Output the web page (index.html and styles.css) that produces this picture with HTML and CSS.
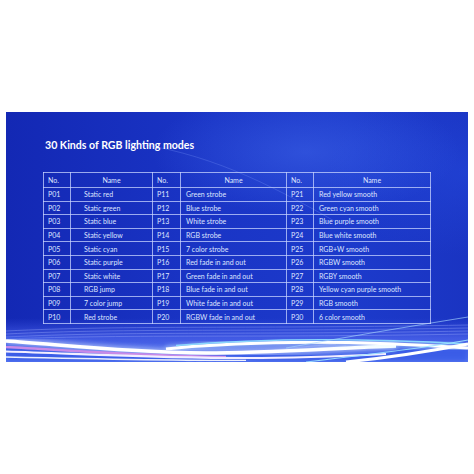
FILE: index.html
```html
<!DOCTYPE html>
<html>
<head>
<meta charset="utf-8">
<link rel="stylesheet" href="styles.css">
</head>
<body>
<div class="banner">
  <svg class="streaks" viewBox="0 0 462 250" preserveAspectRatio="none">
    <defs>
      <linearGradient id="glow" x1="0" y1="0" x2="0" y2="1">
        <stop offset="0" stop-color="#3a50e0" stop-opacity="0"/>
        <stop offset="0.45" stop-color="#4a62ea" stop-opacity="0.8"/>
        <stop offset="1" stop-color="#6080f4" stop-opacity="1"/>
      </linearGradient>
      <filter id="b1"><feGaussianBlur stdDeviation="0.7"/></filter>
      <filter id="b2"><feGaussianBlur stdDeviation="2.5"/></filter>
    </defs>
    <rect x="0" y="206" width="462" height="44" fill="url(#glow)"/>
    <g stroke="#a4b4ff" stroke-width="0.6" fill="none" opacity="0.6">
      <path d="M0 219 C120 213 250 217 462 213"/>
      <path d="M0 222 C120 216 250 220 462 216"/>
      <path d="M0 225 C120 219 250 223 462 219"/>
      <path d="M0 227 C130 222 250 226 462 222"/>
      <path d="M180 250 C230 242 280 236 330 232"/>
      <path d="M190 250 C240 243 290 238 340 234"/>
      <path d="M200 250 C250 244 300 240 350 236"/>
      <path d="M210 250 C260 245 310 241 360 238"/>
      <path d="M220 250 C270 246 320 243 370 240"/>
    </g>
    <path d="M0 226 C60 230 130 238 234 238 C300 238 380 234 462 234 L462 250 L0 250 Z" fill="#3658e6" opacity="0.8" filter="url(#b2)"/>
    <path d="M0 229 C50 232 110 240 200 241 C260 241 330 236 390 234" stroke="#dfe8ff" stroke-width="7" fill="none" opacity="0.6" filter="url(#b2)"/>
    <path d="M0 229 C50 232 110 240 200 241 C260 241 330 236 390 234" stroke="#ffffff" stroke-width="3.6" fill="none" filter="url(#b1)"/>
    <path d="M0 235 C60 238 130 244 220 245" stroke="#c88ae8" stroke-width="2.4" fill="none" filter="url(#b1)"/>
    <path d="M0 239.5 C70 241.5 150 246 240 246 C300 246 340 244 380 242" stroke="#f2eeff" stroke-width="2.2" fill="none" filter="url(#b1)"/>
    <path d="M0 245 C90 247 170 248.5 240 248.5" stroke="#ffffff" stroke-width="1.6" fill="none" opacity="0.9" filter="url(#b1)"/>
    <path d="M160 237 C260 227 360 229 462 236" stroke="#cff4ff" stroke-width="6" fill="none" opacity="0.5" filter="url(#b2)"/>
    <path d="M160 237 C260 227 360 229 462 236" stroke="#ffffff" stroke-width="3" fill="none" filter="url(#b1)"/>
    <path d="M170 233.5 C270 225 370 227 462 232" stroke="#8fe0ff" stroke-width="1.4" fill="none" opacity="0.9" filter="url(#b1)"/>
    <path d="M340 250 C380 246 420 240 462 232" stroke="#ffffff" stroke-width="2.8" fill="none" filter="url(#b1)"/>
    <path d="M300 250 C360 243 420 236 462 228" stroke="#9fe4ff" stroke-width="1.2" fill="none" opacity="0.9"/>
    <path d="M280 236 C340 225 400 215 462 205" stroke="#a8d8ff" stroke-width="0.8" fill="none" opacity="0.8"/>
    <path d="M120 30 C200 40 260 70 330 110" stroke="#6a86f0" stroke-width="0.7" fill="none" opacity="0.5"/>
  </svg>
  <h1 class="title">30 Kinds of RGB lighting modes</h1>
  <table class="modes">
    <colgroup>
      <col class="w1"><col class="w2"><col class="w3"><col class="w4"><col class="w5"><col class="w6">
    </colgroup>
    <thead>
      <tr><th class="no">No.</th><th>Name</th><th class="no">No.</th><th>Name</th><th class="no">No.</th><th>Name</th></tr>
    </thead>
    <tbody>
      <tr><td class="no">P01</td><td class="nm">Static red</td><td class="no">P11</td><td class="nm">Green strobe</td><td class="no">P21</td><td class="nm">Red yellow smooth</td></tr>
      <tr><td class="no">P02</td><td class="nm">Static green</td><td class="no">P12</td><td class="nm">Blue strobe</td><td class="no">P22</td><td class="nm">Green cyan smooth</td></tr>
      <tr><td class="no">P03</td><td class="nm">Static blue</td><td class="no">P13</td><td class="nm">White strobe</td><td class="no">P23</td><td class="nm">Blue purple smooth</td></tr>
      <tr><td class="no">P04</td><td class="nm">Static yellow</td><td class="no">P14</td><td class="nm">RGB strobe</td><td class="no">P24</td><td class="nm">Blue white smooth</td></tr>
      <tr><td class="no">P05</td><td class="nm">Static cyan</td><td class="no">P15</td><td class="nm">7 color strobe</td><td class="no">P25</td><td class="nm">RGB+W smooth</td></tr>
      <tr><td class="no">P06</td><td class="nm">Static purple</td><td class="no">P16</td><td class="nm">Red fade in and out</td><td class="no">P26</td><td class="nm">RGBW smooth</td></tr>
      <tr><td class="no">P07</td><td class="nm">Static white</td><td class="no">P17</td><td class="nm">Green fade in and out</td><td class="no">P27</td><td class="nm">RGBY smooth</td></tr>
      <tr><td class="no">P08</td><td class="nm">RGB jump</td><td class="no">P18</td><td class="nm">Blue fade in and out</td><td class="no">P28</td><td class="nm">Yellow cyan purple smooth</td></tr>
      <tr><td class="no">P09</td><td class="nm">7 color jump</td><td class="no">P19</td><td class="nm">White fade in and out</td><td class="no">P29</td><td class="nm">RGB smooth</td></tr>
      <tr><td class="no">P10</td><td class="nm">Red strobe</td><td class="no">P20</td><td class="nm">RGBW fade in and out</td><td class="no">P30</td><td class="nm">6 color smooth</td></tr>
    </tbody>
  </table>
</div>
</body>
</html>
```
FILE: styles.css
```css
html, body {
  margin: 0;
  padding: 0;
  background: #ffffff;
}
body {
  width: 474px;
  height: 474px;
  overflow: hidden;
}
.banner {
  position: relative;
  margin: 112px 6px 0 6px;
  height: 250px;
  box-sizing: border-box;
  padding: 27px 0 0 37px;
  overflow: hidden;
  background:
    radial-gradient(ellipse 220px 90px at 300px 40px, rgba(70,110,240,0.45), rgba(70,110,240,0) 70%),
    radial-gradient(ellipse 200px 120px at 460px 60px, rgba(40,80,230,0.4), rgba(40,80,230,0) 70%),
    linear-gradient(90deg, #1328b4 0%, #1a35c6 45%, #1c3acb 75%, #1a34c2 100%);
}
.streaks {
  position: absolute;
  left: 0;
  top: 0;
  width: 462px;
  height: 250px;
}
.title {
  position: relative;
  margin: 0 0 20px 2px;
  font-family: "Lato", "Liberation Sans", sans-serif;
  font-weight: 700;
  font-size: 10.6px;
  line-height: 13px;
  color: #ffffff;
}
.modes {
  position: relative;
  border-collapse: collapse;
  font-family: "Lato", "Liberation Sans", sans-serif;
  font-size: 7px;
  color: #dfe5ff;
  table-layout: fixed;
  width: 387px;
}
.w1 { width: 27px; }
.w2 { width: 82px; }
.w3 { width: 28px; }
.w4 { width: 106px; }
.w5 { width: 27px; }
.w6 { width: 117px; }
.modes th, .modes td {
  box-sizing: border-box;
  border: 1px solid rgba(200, 212, 255, 0.75);
  padding: 0;
  white-space: nowrap;
  overflow: hidden;
  font-weight: 400;
}
.modes th {
  height: 15px;
  text-align: center;
}
.modes td {
  height: 13.6px;
}
.modes .no {
  text-align: left;
  padding-left: 4px;
}
.modes td.nm {
  padding-left: 5px;
}
.modes td:nth-child(2) {
  padding-left: 13px;
}
```
